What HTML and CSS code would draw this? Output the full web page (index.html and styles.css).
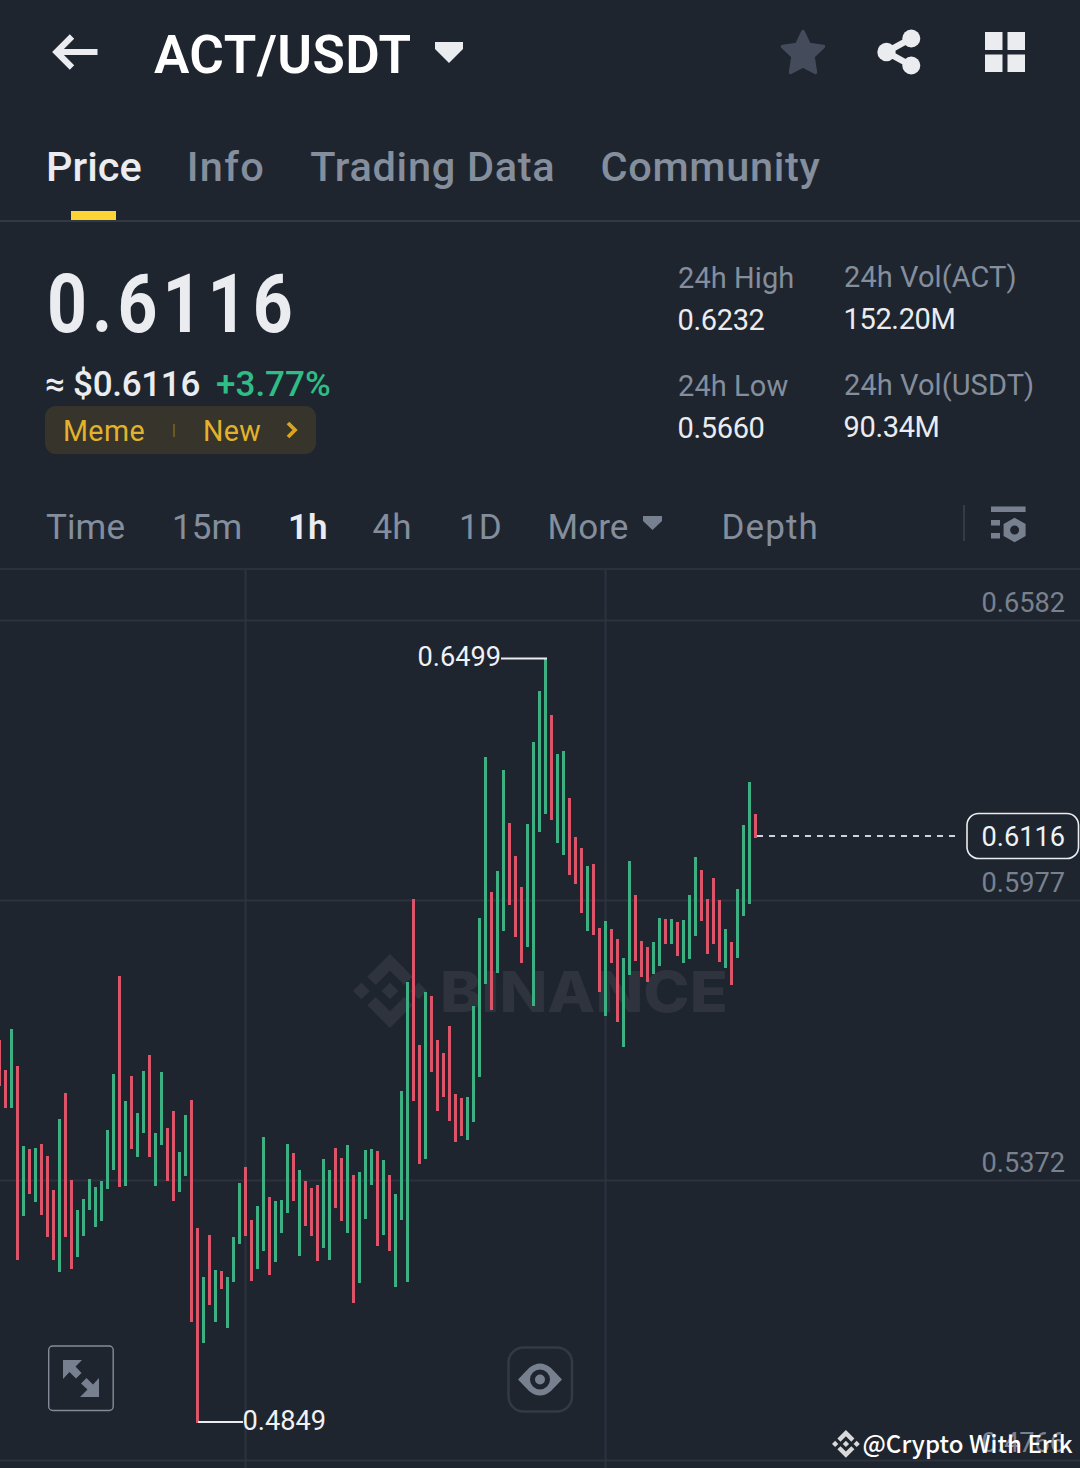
FILE: index.html
```html
<!DOCTYPE html>
<html lang="en">
<head>
<meta charset="utf-8">
<title>ACT/USDT</title>
<link rel="stylesheet" href="styles.css">
</head>
<body>
<header class="topbar">
  <svg class="back" width="46" height="38" viewBox="52 33 46 38"><path d="M97.5 52H57M72 36.500L56.500 52 72 67.500" fill="none" stroke="#eaecef" stroke-width="6.200"/></svg>
  <h1 class="pair">ACT/USDT</h1>
  <svg class="pair-caret" width="28" height="22" viewBox="0 0 28 22"><path d="M0 0H28V7L14 21 0 7Z" fill="#eaecef"/></svg>
  <div class="actions">
    <svg width="46" height="48" viewBox="780 29 46 48"><path d="M803 32.500L809.200 45.500 823.500 47.500 813 57.500 815.500 73.500 803 67 790.500 73.500 793 57.500 782.500 47.500 796.800 45.500Z" fill="#444c5b" stroke="#444c5b" stroke-width="3.500" stroke-linejoin="round"/></svg>
    <svg width="44" height="48" viewBox="877 28 44 48"><g fill="#eaecef"><circle cx="886.500" cy="52" r="9.200"/><circle cx="911.300" cy="38.500" r="9"/><circle cx="911.300" cy="65.500" r="9"/></g><path d="M911 38.500L886.500 52 911 65.500" fill="none" stroke="#eaecef" stroke-width="6.500"/></svg>
    <svg width="40" height="40" viewBox="0 0 40 40"><path d="M0 0H17.500V18H0ZM22.500 0H40V18H22.500ZM0 22.500H17.500V40H0ZM22.500 22.500H40V40H22.500Z" fill="#eaecef"/></svg>
  </div>
</header>
<nav class="tabs">
  <span class="tab tab-active">Price</span>
  <span class="tab tab-info">Info</span>
  <span class="tab">Trading Data</span>
  <span class="tab">Community</span>
</nav>
<section class="summary">
  <div class="quote">
    <div class="last">0.6116</div>
    <div class="sub"><span class="fiat">≈ $0.6116</span><span class="change">+3.77%</span></div>
    <div class="tags"><span>Meme</span><i class="tag-sep"></i><span>New</span><svg class="chev" width="12" height="18" viewBox="0 0 12 18"><path d="M2 2L9 9 2 16" fill="none" stroke="#d9a51c" stroke-width="3.800"/></svg></div>
  </div>
  <dl class="stats">
    <div class="stat"><dt>24h High</dt><dd>0.6232</dd></div>
    <div class="stat stat-vol"><dt>24h Vol(ACT)</dt><dd>152.20M</dd></div>
    <div class="stat"><dt>24h Low</dt><dd>0.5660</dd></div>
    <div class="stat stat-vol"><dt>24h Vol(USDT)</dt><dd>90.34M</dd></div>
  </dl>
</section>
<nav class="intervals">
  <span>Time</span><span>15m</span><span class="iv-active">1h</span><span>4h</span><span>1D</span><span>More</span>
  <svg class="more-caret" width="19" height="14" viewBox="0 0 19 14"><path d="M0 0H19V5L9.500 14 0 5Z" fill="#76808f"/></svg>
  <span class="iv-depth">Depth</span>
  <i class="iv-sep"></i>
  <svg class="settings" width="36" height="37" viewBox="990 506 36 37"><path d="M991 506.500H1025.600V512H991ZM991 520H1000V525.500H991ZM991 533H1000V538.500H991Z" fill="#76808f"/><path fill-rule="evenodd" d="M1014.600 517.700L1025.600 524V536L1014.600 542.300 1003.600 536V524ZM1014.600 525.500A4.500 4.500 0 1 0 1014.600 534.500 4.500 4.500 0 1 0 1014.600 525.500Z" fill="#76808f"/></svg>
</nav>
<main class="chart">
  <svg class="plot" width="1080" height="898" viewBox="0 570 1080 898">
    <defs><path id="bnb" d="M16.624 13.9202l2.7175 2.7154-7.353 7.353-7.353-7.352 2.7175-2.7164 4.6355 4.6595 4.6356-4.6595zm4.6366-4.6366L24 12l-2.7154 2.7164L18.5682 12l2.6924-2.7164zm-9.272.001l2.7163 2.6914-2.7164 2.7174v-.001L9.2721 12l2.7164-2.7154zm-9.2722-.001L5.4088 12l-2.6914 2.6924L0 12l2.7164-2.7164zM11.9885.0115l7.353 7.329-2.7174 2.7154-4.6356-4.6356-4.6355 4.6595-2.7174-2.7154 7.353-7.353z"/></defs>
    <path class="grid" d="M0 620.500H1080M0 900.500H1080M0 1180.500H1080M0 1460.500H1080M245.500 570V1468M605.500 570V1468"/>
    <g class="watermark"><use href="#bnb" transform="translate(353 954) scale(3.083)"/><text x="440" y="1011.500" textLength="288" lengthAdjust="spacingAndGlyphs">BINANCE</text></g>
    <path class="down" d="M-.5 1040V1086M5.500 1070V1108M17.500 1066V1260M29.500 1149V1194M41.500 1144V1215M47.500 1156V1237M53.500 1190V1260M65.500 1093V1237M71.500 1180V1269M119.500 976V1187M131.500 1076V1149M149.500 1055V1157M167.500 1128V1181M173.500 1111V1201M191.500 1100V1322M197.500 1228V1423M209.500 1235V1305M221.500 1271V1289M245.500 1167V1236M251.500 1220V1281M269.500 1197V1275M293.500 1153V1201M305.500 1181V1226M311.500 1188V1236M317.500 1185V1261M335.500 1148V1208M341.500 1158V1221M353.500 1175V1303M377.500 1151V1246M389.500 1175V1251M413.500 899V1101M419.500 1045V1164M431.500 996V1072M437.500 1040V1111M443.500 1053V1097M449.500 1026V1121M455.500 1094V1142M461.500 1098V1136M491.500 892V1010M509.500 823V905M515.500 856V937M521.500 887V963M551.500 715V820M569.500 798V875M575.500 837V884M581.500 848V913M593.500 864V935M599.500 928V992M611.500 929V963M617.500 939V1022M635.500 895V961M641.500 941V977M647.500 947V982M665.500 919V944M677.500 922V956M701.500 870V921M707.500 899V954M713.500 878V944M719.500 900V962M731.500 942V985M755.500 814V838"/>
    <path class="up" d="M11.500 1029V1108M23.500 1146V1216M35.500 1148V1202M59.500 1119V1272M77.500 1210V1257M83.500 1199V1236M89.500 1179V1210M95.500 1187V1227M101.500 1181V1221M107.500 1130V1189M113.500 1074V1170M125.500 1101V1186M137.500 1113V1157M143.500 1071V1133M155.500 1133V1186M161.500 1072V1145M179.500 1152V1192M185.500 1115V1176M203.500 1277V1343M215.500 1270V1322M227.500 1277V1328M233.500 1237V1282M239.500 1183V1244M257.500 1206V1269M263.500 1137V1251M275.500 1201V1262M281.500 1200V1233M287.500 1144V1213M299.500 1170V1256M323.500 1159V1248M329.500 1170V1260M347.500 1145V1233M359.500 1172V1283M365.500 1150V1219M371.500 1149V1185M383.500 1160V1235M395.500 1194V1287M401.500 1091V1220M407.500 982V1282M425.500 992V1159M467.500 1097V1140M473.500 1006V1122M479.500 918V1077M485.500 757V984M497.500 871V973M503.500 770V931M527.500 824V947M533.500 742V1006M539.500 691V832M545.500 658V814M557.500 754V843M563.500 751V855M587.500 866V931M605.500 921V1016M623.500 958V1047M629.500 861V975M653.500 942V974M659.500 918V966M671.500 919V944M683.500 920V963M689.500 895V959M695.500 857V936M725.500 929V968M737.500 889V958M743.500 825V916M749.500 782V904"/>
    <path class="leader" d="M501 658.500H547M198 1422H243"/>
    <path class="last-line" d="M757 836H957"/>
    <rect class="last-box" x="967" y="813.500" width="111.500" height="45" rx="11.500"/>
    <g class="axis"><text x="981.500" y="612">0.6582</text><text x="981.500" y="892">0.5977</text><text x="981.500" y="1172">0.5372</text><text x="981.500" y="1452">0.4766</text></g>
    <g class="marks"><text x="981.500" y="846">0.6116</text><text x="417.500" y="666">0.6499</text><text x="242.500" y="1430">0.4849</text></g>
    <g fill="none"><rect x="48.700" y="1346" width="64.500" height="64.500" rx="4" stroke="#858b99" stroke-width="1.400"/><rect x="508.500" y="1347.500" width="63.500" height="64" rx="15" stroke="#333945" stroke-width="2.500"/></g>
    <path class="glyph" d="M63 1360H82L75.500 1366.500 81.500 1373 76 1378.500 69.500 1372 63 1379ZM99 1397H80L87.500 1389.500 81 1383.500 86.500 1378 93 1384.500 99 1378Z"/>
    <path class="glyph" fill-rule="evenodd" d="M518 1379.500L529 1368Q540 1359 551 1368L562 1379.500 551 1391Q540 1400 529 1391ZM540 1369.500A10 10 0 1 0 540 1389.500 10 10 0 1 0 540 1369.500ZM540 1374.500A5 5 0 1 1 540 1384.500 5 5 0 1 1 540 1374.500Z"/>
    <g class="credit"><use href="#bnb" transform="translate(832 1430) scale(1.160)"/><text x="862.500" y="1453" textLength="210">@Crypto With Erik</text></g>
  </svg>
</main>
</body>
</html>
```
FILE: styles.css
```css
* { box-sizing: border-box; }
body { margin: 0; width: 1080px; height: 1468px; overflow: hidden; background: #1f252f; color: #eaecef; font-family: Roboto, "Liberation Sans", sans-serif; }
svg { display: block; flex: none; }
h1, dl, dd, dt { margin: 0; font-weight: inherit; }
span, dt, dd { white-space: nowrap; }
.topbar { display: flex; align-items: center; height: 104px; padding: 0 55px 0 52px; }
.pair { margin-left: 56px; padding-top: 5px; font-size: 53px; font-weight: 600; line-height: 60px; letter-spacing: 0.4px; color: #fff; }
.pair-caret { margin: 2px 0 0 23px; }
.actions { display: flex; align-items: center; margin-left: auto; }
.actions svg + svg { margin-left: 51px; }
.actions svg + svg + svg { margin-left: 64px; }
.tabs { display: flex; height: 118px; padding: 35px 0 0 46px; gap: 45px; border-bottom: 2px solid #333944; font-size: 41.5px; font-weight: 500; line-height: 56px; letter-spacing: 0.7px; color: #848e9c; }
.tab-info { letter-spacing: 1.4px; }
.tab-active { display: flex; flex-direction: column; align-items: center; justify-content: space-between; letter-spacing: 0; color: #eaecef; }
.tab-active::after { content: ""; width: 45px; height: 9px; background: #fcd535; }
.summary { display: flex; justify-content: space-between; height: 262px; padding: 0 0 0 45px; }
.quote { padding-top: 32px; }
.last { width: 300px; height: 100px; margin-left: 1.5px; font-size: 82px; font-weight: 700; line-height: 100px; letter-spacing: 6px; transform: scaleX(0.85); transform-origin: left; }
.sub { display: flex; gap: 16px; height: 52px; font-size: 35px; font-weight: 500; line-height: 61px; }
.fiat { letter-spacing: -0.3px; }
.change { color: #2ebd85; }
.tags { display: flex; align-items: center; width: 271px; height: 48px; padding-left: 18px; border-radius: 11px; background: #36342b; color: #e3b22b; font-size: 28.6px; line-height: 46px; letter-spacing: 0.4px; }
.tags span { padding-top: 2px; }
.tag-sep { width: 2px; height: 13px; margin: 0 28px; background: #6b5923; }
.chev { margin-left: 25px; }
.stats { display: grid; grid-template-columns: 166px 236px; grid-template-rows: 108px 108px; padding-top: 35px; font-size: 29px; }
.stat { line-height: 42px; }
.stat-vol { margin-top: -1px; }
.stat dt { letter-spacing: 0.08px; color: #848e9c; }
.stat dd { margin-left: -0.5px; letter-spacing: -0.35px; }
.intervals { display: grid; grid-template-columns: 126px 116px 84.5px 86.5px 88.5px 95.5px 78.5px 241.5px 26.5px 36px; align-items: center; height: 86px; padding-left: 46px; border-bottom: 2px solid #2b313c; font-size: 35px; line-height: 48px; letter-spacing: 0.1px; color: #848e9c; }
.intervals span { padding-top: 3px; }
.iv-active { color: #eaecef; font-weight: 600; }
.intervals .iv-depth { letter-spacing: 1.1px; }
.more-caret { margin-bottom: 6px; }
.iv-sep { width: 2px; height: 36px; margin-bottom: 6px; background: #343b47; }
.settings { margin-bottom: 3px; }
.chart { height: 898px; }
.grid { stroke: #2d333e; stroke-width: 2; fill: none; }
.watermark { fill: #2e333d; }
.watermark text { font: 800 57px Inter, sans-serif; }
.down, .up { fill: none; stroke-width: 3; }
.down { stroke: #db5468; }
.up { stroke: #3db083; }
.leader { fill: none; stroke: #eaecef; stroke-width: 1.8; }
.last-line { fill: none; stroke: #ced3d8; stroke-width: 1.8; stroke-dasharray: 6 6; }
.last-box { fill: #1f252f; stroke: #eaecef; stroke-width: 1.6; }
.axis, .marks { font-size: 27.2px; }
.axis { fill: #79818f; }
.marks { fill: #eff1f4; }
.glyph { fill: #76808f; }
.credit { fill: #d9d9d9; }
.credit text { fill: #fff; font: 500 24px "Noto Sans CJK SC", sans-serif; }
```
